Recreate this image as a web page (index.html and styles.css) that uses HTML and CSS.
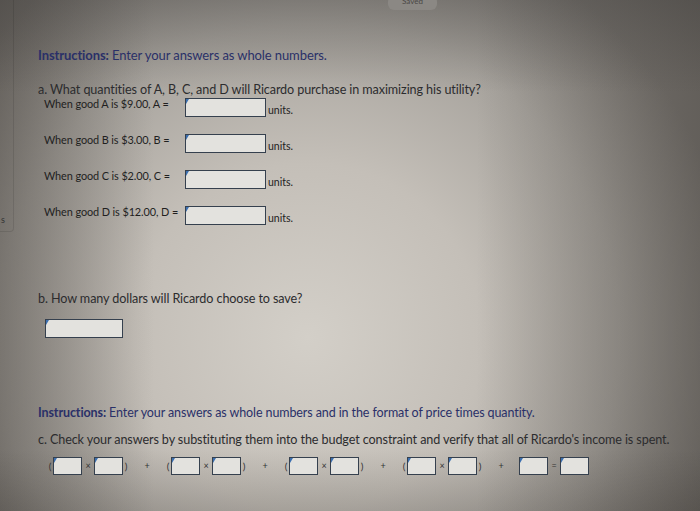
FILE: index.html
```html
<!DOCTYPE html>
<html>
<head>
<meta charset="utf-8">
<link rel="stylesheet" href="styles.css">
</head>
<body>
<div class="saved">Saved</div>
<div class="page">
  <div class="side"><span class="side-text">s</span></div>
  <div class="main">
    <p class="instr"><b>Instructions:</b> Enter your answers as whole numbers.</p>
    <p class="q q-a">a. What quantities of A, B, C, and D will Ricardo purchase in maximizing his utility?</p>
    <div class="rows">
      <div class="row"><span class="lbl">When good A is $9.00, A =</span><span class="box wide"></span><span class="units">units.</span></div>
      <div class="row"><span class="lbl">When good B is $3.00, B =</span><span class="box wide"></span><span class="units">units.</span></div>
      <div class="row"><span class="lbl">When good C is $2.00, C =</span><span class="box wide"></span><span class="units">units.</span></div>
      <div class="row"><span class="lbl">When good D is $12.00, D =</span><span class="box wide"></span><span class="units">units.</span></div>
    </div>
    <p class="q q-b">b. How many dollars will Ricardo choose to save?</p>
    <span class="box save"></span>
    <p class="instr instr2"><b>Instructions:</b> Enter your answers as whole numbers and in the format of price times quantity.</p>
    <p class="q q-c">c. Check your answers by substituting them into the budget constraint and verify that all of Ricardo's income is spent.</p>
    <div class="eq">
      <span class="op par">(</span><span class="box sm"></span><span class="op">×</span><span class="box sm"></span><span class="op par">)</span>
      <span class="op plus">+</span>
      <span class="op par">(</span><span class="box sm"></span><span class="op">×</span><span class="box sm"></span><span class="op par">)</span>
      <span class="op plus">+</span>
      <span class="op par">(</span><span class="box sm"></span><span class="op">×</span><span class="box sm"></span><span class="op par">)</span>
      <span class="op plus">+</span>
      <span class="op par">(</span><span class="box sm"></span><span class="op">×</span><span class="box sm"></span><span class="op par">)</span>
      <span class="op plus">+</span>
      <span class="box sm"></span><span class="op">=</span><span class="box sm"></span>
    </div>
  </div>
</div>
</body>
</html>
```
FILE: styles.css
```css
html, body {
  margin: 0;
  padding: 0;
}
body {
  width: 700px;
  height: 511px;
  overflow: hidden;
  position: relative;
  font-family: Lato, "Open Sans", "Liberation Sans", sans-serif;
  background:
    linear-gradient(to bottom, rgba(60,58,56,0.35) 0%, rgba(60,58,56,0) 18%, rgba(60,58,56,0) 88%, rgba(40,36,32,0.2) 100%),
    linear-gradient(to right, rgba(50,46,42,0.4) 0%, rgba(50,46,42,0) 22%, rgba(50,46,42,0) 68%, rgba(50,46,42,0.4) 100%),
    radial-gradient(ellipse 62% 85% at 44% 66%, #d3cfc8 0%, #c4bfb8 40%, #a8a49e 72%, #84807b 100%);
}
.saved {
  position: absolute;
  left: 388px;
  top: -4px;
  width: 49px;
  height: 14px;
  border-radius: 6px;
  background: #8b8884;
  color: #4a4744;
  font-size: 8px;
  text-align: center;
  line-height: 10px;
}
.page {
  display: flex;
}
.side {
  width: 13px;
  height: 231px;
  border-right: 1px solid rgba(0,0,0,0.10);
  border-bottom: 1px solid rgba(0,0,0,0.10);
  border-bottom-right-radius: 4px;
  display: flex;
  align-items: flex-end;
  flex-shrink: 0;
}
.side-text {
  font-size: 9px;
  color: #333;
  padding: 0 0 6px 1px;
  line-height: 10px;
}
.main {
  padding: 48px 0 0 24px;
  display: flex;
  flex-direction: column;
  align-items: flex-start;
}
p { margin: 0; }
.instr {
  font-size: 13px;
  line-height: 15px;
  color: #2a3068;
  letter-spacing: -0.1px;
}
.instr b { font-weight: 700; }
.q {
  font-size: 12.6px;
  line-height: 15px;
  color: #2c2c2e;
  letter-spacing: -0.1px;
}
.q-a { margin-top: 19px; }
.rows {
  margin-top: 1px;
  margin-left: 6px;
  display: flex;
  flex-direction: column;
  gap: 17px;
}
.row {
  display: flex;
  height: 19px;
}
.lbl {
  width: 141px;
  font-size: 10.9px;
  line-height: 12px;
  color: #1f1f1f;
  align-self: flex-start;
  letter-spacing: -0.1px;
}
.units {
  font-size: 10.5px;
  line-height: 12px;
  color: #222;
  align-self: flex-end;
  margin-left: 2px;
  margin-bottom: 1px;
}
.box {
  display: inline-block;
  position: relative;
  box-sizing: border-box;
  border: 1.5px solid #35404e;
  background: #e3e2de;
}
.box::before {
  content: "";
  position: absolute;
  left: 0;
  top: 0;
  border-top: 5px solid #3b6fb0;
  border-right: 3px solid transparent;
}
.box.wide { width: 81px; height: 19px; }
.q-b { margin-top: 66px; }
.instr2 { font-size: 12.5px; }
.box.save { width: 78px; height: 19px; margin-top: 13px; margin-left: 7px; }
.instr2 { margin-top: 67px; }
.q-c { margin-top: 12px; }
.eq {
  margin-top: 9px;
  margin-left: 9px;
  display: flex;
  align-items: center;
  height: 19px;
}
.box.sm { width: 29px; height: 18px; }
.op {
  font-size: 9px;
  color: #333;
  width: 12px;
  text-align: center;
}
.op.par { width: 6px; font-size: 10px; }
.op.plus { width: 36px; }
```
